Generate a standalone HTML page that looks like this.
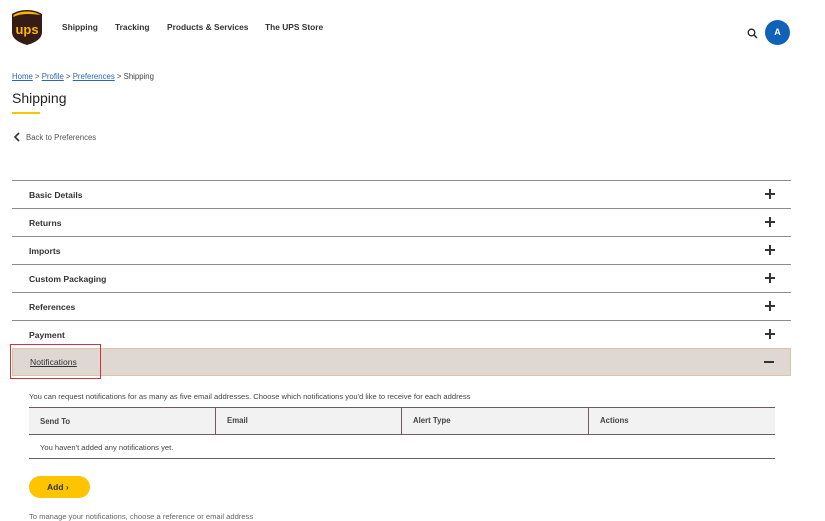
<!DOCTYPE html>
<html><head><style>
*{margin:0;padding:0;box-sizing:border-box}
body{width:825px;height:517px;overflow:hidden;background:#fff;font-family:"Liberation Sans",Arial,sans-serif;color:#242424;position:relative}
.a{position:absolute}
.nav{font-size:8.4px;font-weight:bold;color:#333;top:22px}
.row{position:absolute;left:12px;width:779px;height:28px;border-top:1px solid #8c8c8c;font-size:8.6px;font-weight:bold;color:#333;padding:9px 0 0 17px}
.plus{position:absolute;right:16px;top:8px;width:10px;height:10px}
.plus:before{content:"";position:absolute;left:0;top:4px;width:10px;height:2px;background:#333}
.plus:after{content:"";position:absolute;left:4px;top:0;width:2px;height:10px;background:#333}
.th{position:absolute;top:0;height:28px;font-size:7.8px;font-weight:bold;color:#444;padding:9px 0 0 11px}
</style></head><body>
<svg class="a" style="left:11px;top:9px" width="32" height="37" viewBox="0 0 32 37"><path d="M16 1C10 1 5 2.5 1 5v18c0 6 5 10 15 13 10-3 15-7 15-13V5C27 2.5 22 1 16 1z" fill="#351c15"/><path d="M16 2.5C10.5 2.5 6 3.8 2.5 6v2c5-3 14-4 27-2V6C26 3.8 21.5 2.5 16 2.5z" fill="#ffb500"/><text x="16" y="25" text-anchor="middle" font-family="Liberation Sans" font-weight="bold" font-size="13" fill="#ffb500">ups</text></svg>
<div class="a nav" style="left:62px">Shipping</div>
<div class="a nav" style="left:115px">Tracking</div>
<div class="a nav" style="left:167px">Products &amp; Services</div>
<div class="a nav" style="left:265px">The UPS Store</div>
<svg class="a" style="left:747px;top:28px" width="11" height="11" viewBox="0 0 11 11"><circle cx="4.5" cy="4.5" r="3.3" fill="none" stroke="#222" stroke-width="1.3"/><path d="M7 7l3 3" stroke="#222" stroke-width="1.4"/></svg>
<div class="a" style="left:765px;top:20px;width:25px;height:25px;border-radius:50%;background:#0f62b8;color:#fff;font-size:9px;font-weight:bold;text-align:center;line-height:25px">A</div>
<div class="a" style="left:12px;top:72px;font-size:7.8px;color:#444"><u style="color:#2a67b5">Home</u> &gt; <u style="color:#2a67b5">Profile</u> &gt; <u style="color:#2a67b5">Preferences</u> &gt; Shipping</div>
<div class="a" style="left:12px;top:90px;font-size:14px;color:#222">Shipping</div>
<div class="a" style="left:12px;top:112px;width:28px;height:2px;background:#ffc400"></div>
<svg class="a" style="left:13px;top:132px" width="8" height="10" viewBox="0 0 8 10"><path d="M6 1L2 5l4 4" fill="none" stroke="#333" stroke-width="1.6"/></svg>
<div class="a" style="left:26px;top:133px;font-size:7.8px;color:#555">Back to Preferences</div>
<div class="row" style="top:180px">Basic Details<span class="plus"></span></div>
<div class="row" style="top:208px">Returns<span class="plus"></span></div>
<div class="row" style="top:236px">Imports<span class="plus"></span></div>
<div class="row" style="top:264px">Custom Packaging<span class="plus"></span></div>
<div class="row" style="top:292px">References<span class="plus"></span></div>
<div class="row" style="top:320px">Payment<span class="plus"></span></div>
<div class="row" style="top:348px;background:#dfd7d1;border:1px solid #d9c6a5;font-weight:normal;color:#333;padding-top:8px"><u>Notifications</u><span style="position:absolute;right:16px;top:12px;width:10px;height:2px;background:#333"></span></div>
<div class="a" style="left:10px;top:344px;width:91px;height:35px;border:1.5px solid #d6303c"></div>
<div class="a" style="left:29px;top:392px;font-size:7.6px;color:#444">You can request notifications for as many as five email addresses. Choose which notifications you'd like to receive for each address</div>
<div class="a" style="left:29px;top:407px;width:746px;height:28px;background:#f2f2f2;border-top:1px solid #6b5d5d;border-bottom:1px solid #6b5d5d">
<div class="th" style="left:0">Send To</div>
<div class="th" style="left:186px;border-left:1px solid #6b5d5d;top:-1px;height:28px">Email</div>
<div class="th" style="left:372px;border-left:1px solid #6b5d5d;top:-1px;height:28px">Alert Type</div>
<div class="th" style="left:559px;border-left:1px solid #6b5d5d;top:-1px;height:28px">Actions</div>
</div>
<div class="a" style="left:40px;top:443px;font-size:7.6px;color:#444">You haven't added any notifications yet.</div>
<div class="a" style="left:29px;top:458px;width:746px;height:1px;background:#6b5d5d"></div>
<div class="a" style="left:29px;top:476px;width:61px;height:22px;border-radius:11px;background:#ffc400;font-size:8.5px;font-weight:bold;color:#333;padding:6px 0 0 18px">Add ›</div>
<div class="a" style="left:29px;top:512px;font-size:7.6px;color:#666">To manage your notifications, choose a reference or email address</div>
</body></html>
